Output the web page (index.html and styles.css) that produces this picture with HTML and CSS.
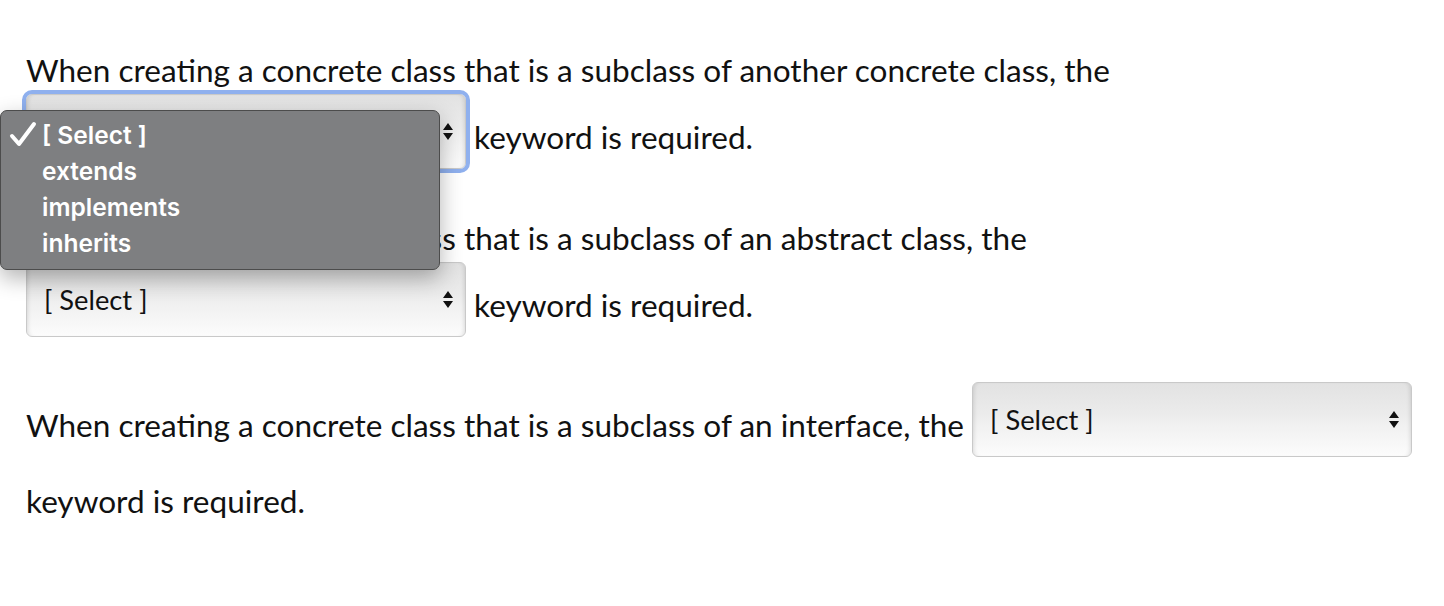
FILE: index.html
```html
<!DOCTYPE html>
<html lang="en">
<head>
    <meta charset="UTF-8">
    <title>Quiz question</title>
    <link rel="stylesheet" href="styles.css">
</head>
<body>
    <div class="quiz">
        <p class="question">
            When creating a concrete class that is a subclass of another concrete class, the
            <span class="select focused">
                <span class="select-label">[ Select ]</span>
                <svg class="arrows" width="10" height="17" viewBox="0 0 10 17"><path d="M5 0 L10 7 L0 7 Z M0 10 L10 10 L5 17 Z" fill="#111"/></svg>
            </span>
            keyword is required.
        </p>
        <p class="question">
            When creating a concrete class that is a subclass of an abstract class, the
            <span class="select">
                <span class="select-label">[ Select ]</span>
                <svg class="arrows" width="10" height="17" viewBox="0 0 10 17"><path d="M5 0 L10 7 L0 7 Z M0 10 L10 10 L5 17 Z" fill="#111"/></svg>
            </span>
            keyword is required.
        </p>
        <p class="question">
            When creating a concrete class that is a subclass of an interface, the
            <span class="select">
                <span class="select-label">[ Select ]</span>
                <svg class="arrows" width="10" height="17" viewBox="0 0 10 17"><path d="M5 0 L10 7 L0 7 Z M0 10 L10 10 L5 17 Z" fill="#111"/></svg>
            </span>
            keyword is required.
        </p>

        <!-- open dropdown of the first select -->
        <ul class="popup">
            <li>
                <svg class="check" width="28" height="28" viewBox="0 0 28 28"><path d="M3 15 L10 23 L25 3" fill="none" stroke="#fff" stroke-width="4" stroke-linecap="round" stroke-linejoin="round"/></svg>
                [ Select ]
            </li>
            <li>extends</li>
            <li>implements</li>
            <li>inherits</li>
        </ul>
    </div>
</body>
</html>
```

FILE: styles.css
```css
body {
    margin: 0;
    background: #fff;
    font-family: Lato, "Open Sans", sans-serif;
    color: #111;
}

.quiz {
    position: relative;
    padding: 46px 26px 0 26px;
    width: 1400px;
}

.question {
    font-size: 31.55px;
    line-height: 48px;
    margin: 0 0 25px 0;
}

.select {
    display: inline-flex;
    align-items: center;
    justify-content: space-between;
    box-sizing: border-box;
    width: 440px;
    height: 75px;
    padding: 0 12px 0 17px;
    margin: 0 0 20px 0;
    vertical-align: middle;
    border: 1px solid #c9c9c9;
    border-radius: 6px;
    background: linear-gradient(#e2e2e2 0%, #ececec 45%, #f0f0f0 55%, #fcfcfc 100%);
    box-shadow: inset 4px 0 4px -3px rgba(0, 0, 0, 0.12), inset -4px 0 4px -3px rgba(0, 0, 0, 0.12);
    font-size: 27.3px;
    color: #111;
}

.select.focused {
    outline: 4px solid #8fb0ee;
    outline-offset: 0;
}

.popup {
    position: absolute;
    left: 0;
    top: 110px;
    width: 440px;
    height: 160px;
    box-sizing: border-box;
    margin: 0;
    padding: 6px 0 0 0;
    list-style: none;
    background: #7e7f81;
    border: 1px solid #4c4c4c;
    border-radius: 7px;
    box-shadow: 0 8px 22px rgba(0, 0, 0, 0.3);
    font-family: Inter, "Noto Sans", sans-serif;
    font-weight: 600;
    font-size: 24.5px;
    color: #fff;
}

.popup li {
    position: relative;
    height: 36px;
    line-height: 36px;
    padding-left: 41px;
}

.popup .check {
    position: absolute;
    left: 8px;
    top: 4px;
}
```
